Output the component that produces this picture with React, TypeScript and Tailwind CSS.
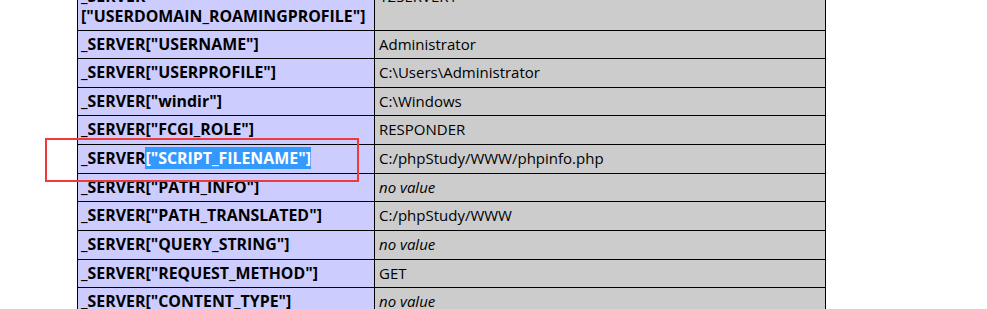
import React from 'react'

type Row = {
  key: React.ReactNode
  value: React.ReactNode
  italic?: boolean
  tall?: boolean
}

const rows: Row[] = [
  {
    key: (
      <>
        _SERVER
        <br />
        ["USERDOMAIN_ROAMINGPROFILE"]
      </>
    ),
    value: '12SERVER1',
    tall: true,
  },
  { key: '_SERVER["USERNAME"]', value: 'Administrator' },
  { key: '_SERVER["USERPROFILE"]', value: 'C:\\Users\\Administrator' },
  { key: '_SERVER["windir"]', value: 'C:\\Windows' },
  { key: '_SERVER["FCGI_ROLE"]', value: 'RESPONDER' },
  {
    key: (
      <>
        _SERVER<span className="bg-[#3399ff] text-white">["SCRIPT_FILENAME"]</span>
      </>
    ),
    value: 'C:/phpStudy/WWW/phpinfo.php',
  },
  { key: '_SERVER["PATH_INFO"]', value: 'no value', italic: true },
  { key: '_SERVER["PATH_TRANSLATED"]', value: 'C:/phpStudy/WWW' },
  { key: '_SERVER["QUERY_STRING"]', value: 'no value', italic: true },
  { key: '_SERVER["REQUEST_METHOD"]', value: 'GET' },
  { key: '_SERVER["CONTENT_TYPE"]', value: 'no value', italic: true },
]

export default function App() {
  return (
    <div
      className="relative w-[987px] h-[309px] overflow-hidden bg-white text-black"
      style={{ fontFamily: '"Open Sans", "Noto Sans", Arial, sans-serif' }}
    >
      <table className="ml-[77px] mt-[-18px] w-[749px] table-fixed border-collapse text-[15px] leading-[20px]">
        <colgroup>
          <col className="w-[297px]" />
          <col />
        </colgroup>
        <tbody>
          {rows.map((row, i) => (
            <tr key={i} className={row.tall ? 'h-[47.5px]' : 'h-[28.67px]'}>
              <td className="border border-black bg-[#ccccff] px-[3px] py-[3px] align-baseline font-bold text-[15.9px] whitespace-nowrap">
                {row.key}
              </td>
              <td
                className={
                  'border border-black bg-[#cccccc] px-[4px] py-[3px] align-baseline ' +
                  (row.italic ? 'italic' : '')
                }
              >
                {row.value}
              </td>
            </tr>
          ))}
        </tbody>
      </table>

      {/* annotation box */}
      <div className="absolute left-[45px] top-[138px] w-[314px] h-[44px] border-[2.5px] border-[#f03a3a]" />
    </div>
  )
}
